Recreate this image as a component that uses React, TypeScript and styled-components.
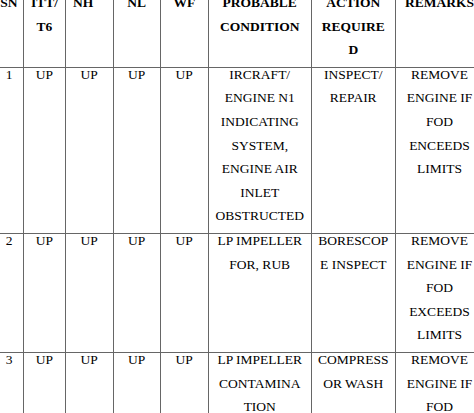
import styled, { createGlobalStyle } from "styled-components";

const GlobalStyle = createGlobalStyle`
  html, body {
    margin: 0;
    padding: 0;
    background: #fff;
    overflow: hidden;
  }
  body {
    font-family: "Liberation Serif", "Times New Roman", serif;
    color: #000;
  }
`;

type Align = "center" | "left";

interface Row {
  sn: string;
  itt: string;
  nh: string;
  nl: string;
  wf: string;
  condition: string[];
  action: string[];
  remarks: string[];
}

const rows: Row[] = [
  {
    sn: "1",
    itt: "UP",
    nh: "UP",
    nl: "UP",
    wf: "UP",
    condition: ["IRCRAFT/", "ENGINE N1", "INDICATING", "SYSTEM,", "ENGINE AIR", "INLET", "OBSTRUCTED"],
    action: ["INSPECT/", "REPAIR"],
    remarks: ["REMOVE", "ENGINE IF", "FOD", "ENCEEDS", "LIMITS"],
  },
  {
    sn: "2",
    itt: "UP",
    nh: "UP",
    nl: "UP",
    wf: "UP",
    condition: ["LP IMPELLER", "FOR, RUB"],
    action: ["BORESCOP", "E INSPECT"],
    remarks: ["REMOVE", "ENGINE IF", "FOD", "EXCEEDS", "LIMITS"],
  },
  {
    sn: "3",
    itt: "UP",
    nh: "UP",
    nl: "UP",
    wf: "UP",
    condition: ["LP IMPELLER", "CONTAMINA", "TION"],
    action: ["COMPRESS", "OR WASH"],
    remarks: ["REMOVE", "ENGINE IF", "FOD"],
  },
];

const headers: { lines: string[]; align?: Align }[] = [
  { lines: ["SN"] },
  { lines: ["ITT/", "T6"] },
  { lines: ["NH"], align: "left" },
  { lines: ["NL"] },
  { lines: ["WF"] },
  { lines: ["PROBABLE", "CONDITION"] },
  { lines: ["ACTION", "REQUIRE", "D"] },
  { lines: ["REMARKS"] },
];

const colWidths = [29, 42, 47.5, 47.5, 47.5, 103.5, 83.5, 89];

const Table = styled.table`
  border-collapse: collapse;
  table-layout: fixed;
  width: 489.5px;
  margin: -5px 0 0 -6px;
  font-size: 13.5px;
`;

const Col = styled.col<{ $w: number }>`
  width: ${(p) => p.$w}px;
`;

const Cell = styled.td<{ $align?: Align }>`
  border: 1px solid #666;
  padding: ${(p) => (p.$align === "left" ? "0 0 0 7px" : "0")};
  vertical-align: top;
  text-align: ${(p) => p.$align ?? "center"};
  white-space: nowrap;
`;

const HeadCell = styled(Cell).attrs({ as: "th" })`
  font-weight: 700;
`;

const Lines = styled.div`
  line-height: 23.6px;
  margin: -5px 0 5px;
`;

function Text({ lines }: { lines: string[] }) {
  return (
    <Lines>
      {lines.map((l, i) => (
        <div key={i}>{l}</div>
      ))}
    </Lines>
  );
}

export default function App() {
  return (
    <>
      <GlobalStyle />
      <Table>
        <colgroup>
          {colWidths.map((w, i) => (
            <Col key={i} $w={w} />
          ))}
        </colgroup>
        <thead>
          <tr>
            {headers.map((h, i) => (
              <HeadCell key={i} $align={h.align}>
                <Text lines={h.lines} />
              </HeadCell>
            ))}
          </tr>
        </thead>
        <tbody>
          {rows.map((r) => (
            <tr key={r.sn}>
              <Cell><Text lines={[r.sn]} /></Cell>
              <Cell><Text lines={[r.itt]} /></Cell>
              <Cell><Text lines={[r.nh]} /></Cell>
              <Cell><Text lines={[r.nl]} /></Cell>
              <Cell><Text lines={[r.wf]} /></Cell>
              <Cell><Text lines={r.condition} /></Cell>
              <Cell><Text lines={r.action} /></Cell>
              <Cell><Text lines={r.remarks} /></Cell>
            </tr>
          ))}
        </tbody>
      </Table>
    </>
  );
}
